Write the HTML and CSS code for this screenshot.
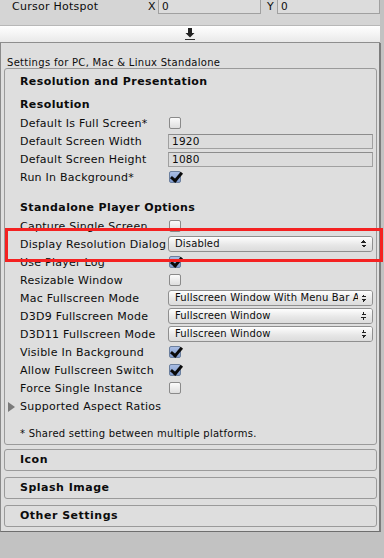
FILE: index.html
```html
<!DOCTYPE html>
<html lang="en">
<head>
    <meta charset="UTF-8">
    <meta name="viewport" content="width=device-width, initial-scale=1.0">
    <title>Player Settings</title>
    <link rel="stylesheet" href="styles.css">
</head>
<body>
    <div class="top-area">
        <div class="hotspot-row">
            <span class="hotspot-label">Cursor Hotspot</span>
            <span class="axis">X</span>
            <span class="field hotspot-field">0</span>
            <span class="axis">Y</span>
            <span class="field hotspot-field">0</span>
        </div>
    </div>

    <div class="arrow-bar">
        <svg width="12" height="13" viewBox="0 0 12 13">
            <rect x="4" y="0" width="4" height="5" fill="#222"/>
            <path d="M1.5 5 H10.5 L6 9.5 Z" fill="#222"/>
            <rect x="1" y="11" width="10" height="1" fill="#333"/>
        </svg>
    </div>

    <div class="panel">
        <div class="platform-title">Settings for PC, Mac &amp; Linux Standalone</div>

        <div class="box main-box">
            <div class="box-title">Resolution and Presentation</div>

            <div class="sub-title">Resolution</div>
            <div class="row"><span class="label">Default Is Full Screen*</span><span class="check"></span></div>
            <div class="row"><span class="label">Default Screen Width</span><span class="field">1920</span></div>
            <div class="row"><span class="label">Default Screen Height</span><span class="field">1080</span></div>
            <div class="row"><span class="label">Run In Background*</span><span class="check on"></span></div>

            <div class="sub-title spaced">Standalone Player Options</div>
            <div class="row"><span class="label">Capture Single Screen</span><span class="check"></span></div>
            <div class="row"><span class="label">Display Resolution Dialog</span><span class="popup">Disabled</span></div>
            <div class="row"><span class="label">Use Player Log</span><span class="check on"></span></div>
            <div class="row"><span class="label">Resizable Window</span><span class="check"></span></div>
            <div class="row"><span class="label">Mac Fullscreen Mode</span><span class="popup">Fullscreen Window With Menu Bar And Dock</span></div>
            <div class="row"><span class="label">D3D9 Fullscreen Mode</span><span class="popup">Fullscreen Window</span></div>
            <div class="row"><span class="label">D3D11 Fullscreen Mode</span><span class="popup">Fullscreen Window</span></div>
            <div class="row"><span class="label">Visible In Background</span><span class="check on"></span></div>
            <div class="row"><span class="label">Allow Fullscreen Switch</span><span class="check on"></span></div>
            <div class="row"><span class="label">Force Single Instance</span><span class="check"></span></div>
            <div class="row foldout"><span class="fold-arrow"></span><span>Supported Aspect Ratios</span></div>

            <div class="note">* Shared setting between multiple platforms.</div>
        </div>

        <div class="box section">Icon</div>
        <div class="box section">Splash Image</div>
        <div class="box section">Other Settings</div>

        <div class="highlight"></div>
    </div>
</body>
</html>
```

FILE: styles.css
```css
body {
    margin: 0;
    width: 384px;
    height: 558px;
    overflow: hidden;
    background: #c2c2c2;
    font-family: "DejaVu Sans", Verdana, sans-serif;
    font-size: 11px;
    letter-spacing: 0.25px;
    color: #0c0c0c;
    position: relative;
}
.top-area {
    width: 380px;
    height: 25px;
    background: #d5d5d5;
    overflow: hidden;
}
.hotspot-row {
    display: flex;
    align-items: center;
    height: 16px;
    margin-top: -2px;
}
.hotspot-label {
    width: 136px;
    padding-left: 12px;
}
.axis {
    width: 10px;
}
.field {
    display: flex;
    align-items: center;
    box-sizing: border-box;
    height: 15px;
    width: 205px;
    padding-left: 3px;
    background: #dcdcdc;
    border: 1px solid #a0a0a0;
    border-top-color: #8c8c8c;
    font-size: 10.5px;
    letter-spacing: 0.2px;
}
.hotspot-field {
    width: 103px;
    height: 15px;
    margin-right: 6px;
}
.hotspot-field:last-child {
    margin-right: 0;
}
.arrow-bar {
    box-sizing: border-box;
    width: 380px;
    height: 18px;
    background: linear-gradient(#ffffff, #e9e9e9);
    border-top: 1px solid #b8b8b8;
    border-bottom: 1px solid #8e8e8e;
    display: flex;
    justify-content: center;
    padding-top: 2px;
}
.panel {
    box-sizing: border-box;
    width: 381px;
    height: 489px;
    background: #dedede;
    border-left: 1px solid #8a8a8a;
    border-right: 2px solid #7c7c7c;
    border-bottom: 1px solid #6e6e6e;
    padding: 0 3px 0 3px;
    position: relative;
}
.platform-title {
    height: 25px;
    line-height: 39px;
    padding-left: 3px;
    font-size: 10px;
    letter-spacing: 0.3px;
}
.box {
    box-sizing: border-box;
    width: 373px;
    border: 1px solid #9a9a9a;
    border-radius: 3px;
}
.main-box {
    height: 377px;
    padding-left: 15px;
}
.box-title {
    font-weight: bold;
    height: 22px;
    padding-top: 2px;
    line-height: 22px;
}
.sub-title {
    font-weight: bold;
    height: 21px;
    line-height: 24px;
}
.sub-title.spaced {
    margin-top: 11px;
    height: 20px;
    line-height: 22px;
}
.row {
    display: flex;
    align-items: center;
    height: 18px;
}
.label {
    width: 148px;
    flex: none;
    white-space: nowrap;
}
.check {
    box-sizing: border-box;
    width: 12px;
    height: 12px;
    margin-left: 1px;
    border: 1px solid #8a8a8a;
    border-radius: 2px;
    background: linear-gradient(#fbfbfb, #dedede);
    position: relative;
}
.check.on {
    background: linear-gradient(#a9bde3, #7f9bcf);
    border-color: #6b7f9e;
}
.check.on::after {
    content: "";
    position: absolute;
    left: 3px;
    top: -2px;
    width: 4px;
    height: 9px;
    border: solid #0a0a0a;
    border-width: 0 3px 3px 0;
    transform: rotate(40deg);
}
.popup {
    box-sizing: border-box;
    width: 205px;
    height: 16px;
    padding: 0 14px 0 6px;
    border: 1px solid #8f8f8f;
    border-radius: 3px;
    background: linear-gradient(#fefefe, #e6e6e6 60%, #dcdcdc);
    line-height: 14px;
    font-size: 10px;
    letter-spacing: 0.15px;
    white-space: nowrap;
    overflow: hidden;
    position: relative;
}
.popup::before {
    content: "";
    position: absolute;
    right: 0;
    top: 0;
    bottom: 0;
    width: 14px;
    background: linear-gradient(#fefefe, #e6e6e6 60%, #dcdcdc);
}
.popup::after {
    content: "";
    position: absolute;
    right: 6px;
    top: 3px;
    width: 5px;
    height: 8px;
    background:
        linear-gradient(to bottom right, transparent 50%, #222 50%) left top / 3px 3px no-repeat,
        linear-gradient(to bottom left, transparent 50%, #222 50%) 2px 0 / 3px 3px no-repeat,
        linear-gradient(to top right, transparent 50%, #222 50%) left bottom / 3px 3px no-repeat,
        linear-gradient(to top left, transparent 50%, #222 50%) 2px bottom / 3px 3px no-repeat;
}
.foldout {
    margin-left: -12px;
    height: 19px;
}
.fold-arrow {
    width: 0;
    height: 0;
    border-top: 5px solid transparent;
    border-bottom: 5px solid transparent;
    border-left: 7px solid #7a7a7a;
    margin-right: 5px;
}
.note {
    margin-top: 12px;
    font-size: 10px;
}
.section {
    margin-top: 6px;
    height: 22px;
    line-height: 20px;
    padding-left: 15px;
    font-weight: bold;
    letter-spacing: 0.5px;
}
.box-title,
.sub-title {
    letter-spacing: 0.4px;
}
.main-box + .section {
    margin-top: 4px;
}
.highlight {
    position: absolute;
    left: 4px;
    top: 185px;
    width: 378px;
    height: 34px;
    box-sizing: border-box;
    border: 3px solid #f42121;
}
```
